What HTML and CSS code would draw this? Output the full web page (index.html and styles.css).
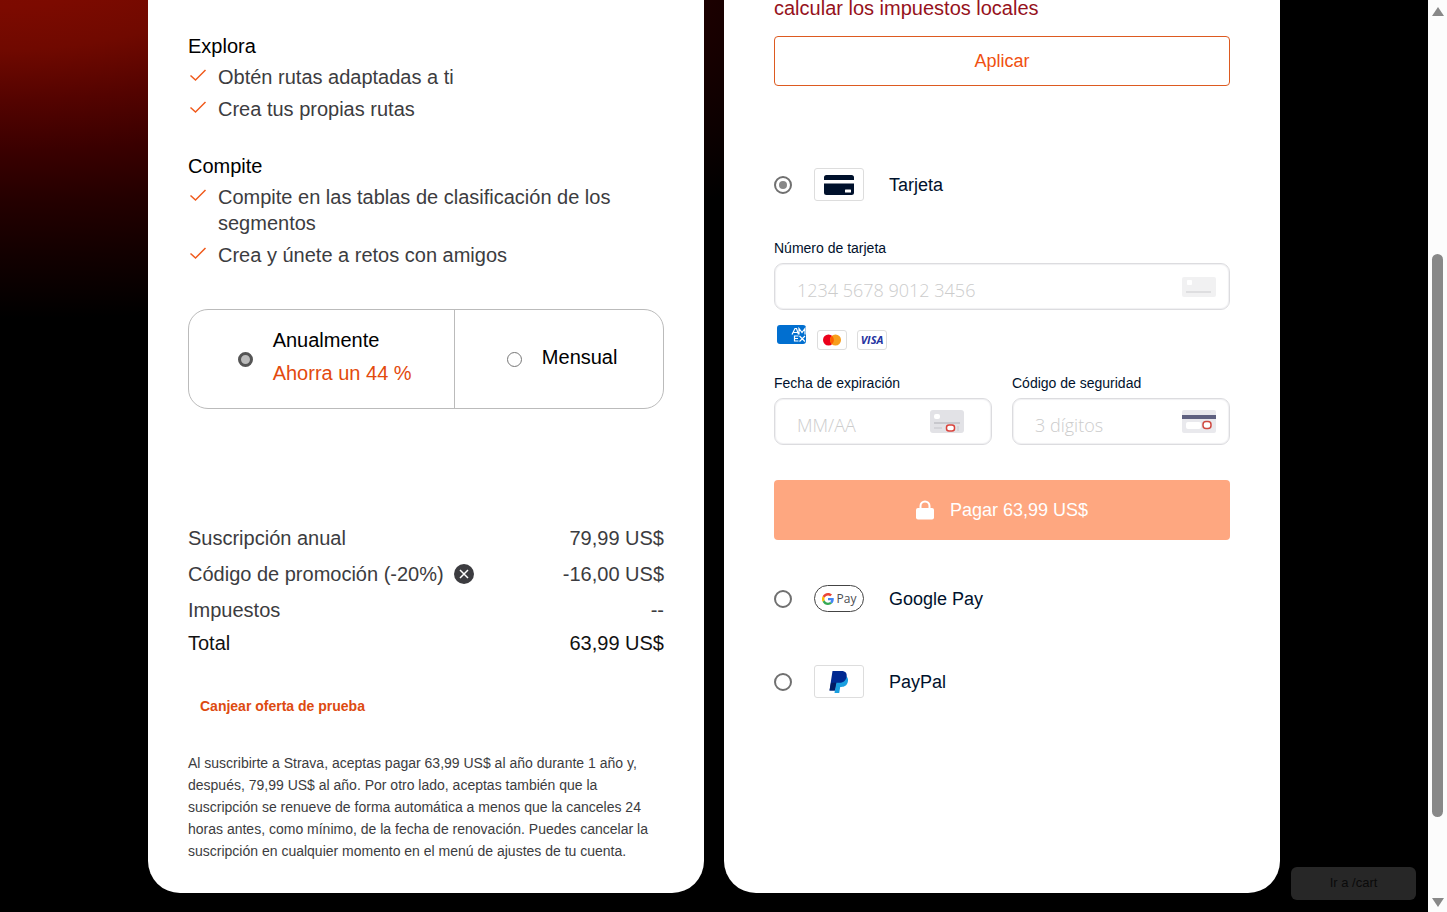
FILE: index.html
```html
<!DOCTYPE html>
<html lang="es">
  <head>
    <meta charset="utf-8">
    <meta name="viewport" content="width=device-width, initial-scale=1">
    <title>Suscripción</title>
    <link rel="stylesheet" href="styles.css">
  </head>
  <body>
    <main class="page">
      <div class="columns">
        <!-- Plan summary -->
        <section class="card card-plan">
          <h2 class="group-title">Explora</h2>
          <ul class="features">
            <li>
              <svg class="check" width="20" height="20" viewBox="0 0 20 20"><path d="M2.5 11.500l5 4.500L17.500 6"></path></svg>
              Obtén rutas adaptadas a ti
            </li>
            <li>
              <svg class="check" width="20" height="20" viewBox="0 0 20 20"><path d="M2.5 11.500l5 4.500L17.500 6"></path></svg>
              Crea tus propias rutas
            </li>
          </ul>
          <h2 class="group-title">Compite</h2>
          <ul class="features">
            <li>
              <svg class="check" width="20" height="20" viewBox="0 0 20 20"><path d="M2.5 11.500l5 4.500L17.500 6"></path></svg>
              Compite en las tablas de clasificación de los segmentos
            </li>
            <li>
              <svg class="check" width="20" height="20" viewBox="0 0 20 20"><path d="M2.5 11.500l5 4.500L17.500 6"></path></svg>
              Crea y únete a retos con amigos
            </li>
          </ul>

          <div class="plans">
            <label class="plan plan-year">
              <input class="plan-radio" type="radio" name="plan" checked>
              <span class="plan-text">Anualmente <span class="saving">Ahorra un 44 %</span></span>
            </label>
            <label class="plan plan-month">
              <input class="plan-radio" type="radio" name="plan">
              <span class="plan-text">Mensual</span>
            </label>
          </div>

          <dl class="summary">
            <div class="summary-row"><dt>Suscripción anual</dt><dd>79,99 US$</dd></div>
            <div class="summary-row">
              <dt>Código de promoción (-20%)
                <button class="remove" type="button" aria-label="Quitar código">
                  <svg width="20" height="20" viewBox="0 0 20 20"><circle cx="10" cy="10" r="10" fill="#3c3c40"></circle><path d="M6 6l8 8M14 6l-8 8" stroke="#fff" stroke-width="1.500"></path></svg>
                </button>
              </dt>
              <dd>-16,00 US$</dd>
            </div>
            <div class="summary-row"><dt>Impuestos</dt><dd>--</dd></div>
            <div class="summary-row total"><dt>Total</dt><dd>63,99 US$</dd></div>
          </dl>

          <button class="redeem" type="button">Canjear oferta de prueba</button>

          <p class="legal">Al suscribirte a Strava, aceptas pagar 63,99 US$ al año durante 1 año y, después, 79,99 US$ al año. Por otro lado, aceptas también que la suscripción se renueve de forma automática a menos que la canceles 24 horas antes, como mínimo, de la fecha de renovación. Puedes cancelar la suscripción en cualquier momento en el menú de ajustes de tu cuenta.</p>
        </section>

        <!-- Payment -->
        <section class="card card-pay">
          <p class="error">calcular los impuestos locales</p>
          <button class="apply" type="button">Aplicar</button>

          <form class="payment">
            <label class="method">
              <input class="method-radio" type="radio" name="method" checked>
              <span class="method-icon">
                <svg width="30" height="20" viewBox="0 0 30 20"><path fill="#00112c" d="M2.500 0h25A2.500 2.500 0 0 1 30 2.500V5H0V2.500A2.500 2.500 0 0 1 2.500 0zM0 8.500h30v9a2.500 2.500 0 0 1-2.500 2.500h-25A2.500 2.500 0 0 1 0 17.500z"></path><rect x="21" y="14.500" width="6" height="3" rx=".5" fill="#fff"></rect></svg>
              </span>
              Tarjeta
            </label>

            <div class="field">
              <label for="number">Número de tarjeta</label>
              <div class="box">
                <input id="number" type="text" placeholder="1234 5678 9012 3456">
                <svg width="34" height="22" viewBox="0 0 34 22"><rect y="1" width="34" height="20" rx="2" fill="#f1f1f2"></rect><rect x="5" y="4" width="5" height="5" rx="1" fill="#fff"></rect><rect x="4" y="15" width="25" height="2" fill="#dedee0"></rect></svg>
              </div>
            </div>

            <div class="brands">
              <svg width="30" height="20" viewBox="0 0 30 20">
                <rect width="29" height="19" rx="3" fill="#016fd0"></rect>
                <g fill="none" stroke="#fff" stroke-width="1.200"><path d="M15 9.500l3-6h1.500l2 6M16.500 7.500h4M22 9.500v-6l3 4 3-4v6M21.500 11h-4v5h4M17.500 13.500h3.500M22.500 11l5.500 5.500M28 11l-5.500 5.500"></path></g>
              </svg>
              <span class="brand">
                <svg width="20" height="12" viewBox="0 0 20 12"><circle cx="6.500" cy="6" r="5.500" fill="#eb001b"></circle><circle cx="13.500" cy="6" r="5.500" fill="#f79e1b"></circle><path d="M10 1.800a5.500 5.500 0 0 1 0 8.400 5.500 5.500 0 0 1 0-8.400z" fill="#ff5f00"></path></svg>
              </span>
              <span class="brand visa">VISA</span>
            </div>

            <div class="pair">
              <div class="field">
                <label for="expiry">Fecha de expiración</label>
                <div class="box box-expiry">
                  <input id="expiry" type="text" placeholder="MM/AA">
                  <svg width="34" height="24" viewBox="0 0 34 24"><rect width="34" height="23" rx="3" fill="#e2e2e6"></rect><rect x="4" y="4" width="6" height="5" rx="2" fill="#fff"></rect><rect x="4" y="12" width="26" height="2" fill="#c8c8cd"></rect><rect x="4" y="17" width="8" height="2" fill="#d3d3d8"></rect><rect x="16.500" y="15" width="8" height="6" rx="2.500" fill="#fff" stroke="#d9433c" stroke-width="1.500"></rect><path d="M28 16v5" stroke="#c8c8cd"></path></svg>
                </div>
              </div>
              <div class="field">
                <label for="cvv">Código de seguridad</label>
                <div class="box">
                  <input id="cvv" type="text" placeholder="3 dígitos">
                  <svg width="34" height="24" viewBox="0 0 34 24"><rect width="34" height="23" rx="2" fill="#e9e9ed"></rect><rect y="5" width="34" height="4" fill="#5f6180"></rect><rect x="4" y="12" width="15" height="7" rx="2" fill="#fff"></rect><rect x="21" y="11.500" width="8" height="7" rx="3" fill="#fff" stroke="#cf4840" stroke-width="1.500"></rect></svg>
                </div>
              </div>
            </div>

            <button class="pay" type="button">
              <svg width="18" height="20" viewBox="0 0 18 20"><path d="M4.500 9V6a4.500 4.500 0 0 1 9 0v3" fill="none" stroke="#fff" stroke-width="2"></path><rect y="8" width="18" height="11.500" rx="2" fill="#fff"></rect></svg>
              Pagar 63,99 US$
            </button>

            <label class="method method-google">
              <input class="method-radio" type="radio" name="method">
              <span class="gpay">
                <svg width="12" height="12" viewBox="0 0 48 48"><path fill="#ea4335" d="M24 9.500c3.500 0 6.700 1.200 9.200 3.600l6.900-6.900C35.900 2.400 30.500 0 24 0 14.600 0 6.500 5.400 2.600 13.200l8 6.200C12.400 13.700 17.700 9.500 24 9.500z"></path><path fill="#4285f4" d="M47 24.500c0-1.600-.2-3.100-.4-4.500H24v9h12.900c-.6 3-2.200 5.500-4.700 7.200l7.700 6C44.400 38 47 31.800 47 24.500z"></path><path fill="#fbbc05" d="M10.500 28.600a14.500 14.500 0 0 1 0-9.200l-8-6.200a24 24 0 0 0 0 21.600z"></path><path fill="#34a853" d="M24 48c6.500 0 11.900-2.100 15.900-5.800l-7.700-6c-2.200 1.500-4.900 2.300-8.200 2.300-6.300 0-11.600-4.200-13.500-9.900l-8 6.200C6.500 42.600 14.600 48 24 48z"></path></svg>
                <span>Pay</span>
              </span>
              Google Pay
            </label>
            <label class="method method-paypal">
              <input class="method-radio" type="radio" name="method">
              <span class="method-icon">
                <svg width="20" height="24" viewBox="0 0 20 24"><path fill="#1a9fe0" d="M17 6c2 1.500 2.400 3.600 1.800 6-.9 3.600-3.500 4.900-6.600 4.900h-1L10.200 23H5.500L7.500 9z"></path><path fill="#002991" d="M3.500 1h9c4 0 5.800 2.200 5.100 6-.8 4-3.600 5.800-7.400 5.800H7.300L5.800 20.500H.500z"></path><path fill="#001c64" d="M.5 20.500L2 12.800h5.300l-1.500 7.700z"></path></svg>
              </span>
              PayPal
            </label>
          </form>
        </section>
      </div>
      <a class="goto" href="/cart">Ir a /cart</a>
    </main>

    <div class="scrollbar" aria-hidden="true">
      <span class="arrow arrow-up"></span>
      <span class="track-before"></span>
      <span class="thumb"></span>
      <span class="track-after"></span>
      <span class="arrow arrow-down"></span>
    </div>
  </body>
</html>
```

FILE: styles.css
```css
* {
  box-sizing: border-box;
}

body {
  margin: 0;
  min-height: 100vh;
  display: flex;
  background-color: #000;
  color: #000;
  font-family: "Liberation Sans", Arial, Helvetica, sans-serif;
  font-size: 20px;
  line-height: 26px;
}

h2, p, ul, dl, dd {
  margin: 0;
  padding: 0;
}

button, input {
  font-family: inherit;
}

svg {
  display: block;
  flex: none;
}

.page {
  flex: 1;
  min-width: 0;
  background: radial-gradient(ellipse 1040px 390px at 0 -40px, #800b00 0%, #7c0a00 12%, #700900 23%, #540300 36%, #3a0000 49%, #240000 62%, #120000 76%, #000 92%);
}

.columns {
  display: grid;
  grid-template-columns: minmax(0, 1fr) minmax(0, 1fr);
  gap: 20px;
  max-width: 1132px;
  margin: 0 auto;
  padding-bottom: 19px;
}

.card {
  background-color: #fff;
  border-radius: 0 0 32px 32px;
}

.card-plan {
  padding: 33px 40px 31px;
}

.card-pay {
  padding: 0 50px;
}

/* Feature lists */
.group-title {
  font-size: 20px;
  font-weight: 400;
  margin-bottom: 5px;
}

.features {
  list-style: none;
  display: flex;
  flex-direction: column;
  gap: 6px;
  margin-bottom: 31px;
  color: #3c3c40;
}

.features li {
  display: flex;
  gap: 10px;
}

.check {
  fill: none;
  stroke: #f05a1c;
  stroke-width: 1.5;
}

/* Plan selector */
.plans {
  display: flex;
  min-height: 100px;
  margin-top: 41px;
  border: 1px solid #bbb;
  border-radius: 20px;
}

.plan {
  display: flex;
  align-items: center;
  justify-content: center;
  gap: 20px;
  padding-left: 6px;
}

.plan-year {
  flex: 9;
  border-right: 1px solid #bbb;
}

.plan-month {
  flex: 7;
}

.plan-text {
  display: flex;
  flex-direction: column;
  gap: 7px;
  padding-bottom: 5px;
}

.saving {
  color: #e34a0d;
}

.plan-radio, .method-radio {
  appearance: none;
  flex: none;
  margin: 0;
  border-radius: 50%;
}

.plan-radio {
  width: 15px;
  height: 15px;
  border: 1px solid #777;
}

.plan-radio:checked {
  border: 3px solid #555;
  background-color: #bbb;
}

/* Price summary */
.summary {
  margin-top: 116px;
  display: flex;
  flex-direction: column;
  gap: 10px;
  color: #3c3c40;
}

.summary-row {
  display: flex;
  justify-content: space-between;
}

.summary-row dt {
  display: flex;
  align-items: center;
  gap: 10px;
}

.total {
  margin-top: -3px;
  color: #111;
}

.remove {
  padding: 0;
  border: none;
  background: none;
  cursor: pointer;
}

.redeem {
  display: block;
  height: 30px;
  margin: 35px 0 31px;
  padding: 0 12px;
  border: none;
  background: none;
  color: #dd4a10;
  font-size: 14px;
  font-weight: 700;
  cursor: pointer;
}

.legal {
  color: #3c3c40;
  font-size: 14px;
  line-height: 22px;
}

/* Payment column */
.error {
  color: #96121c;
  line-height: 16px;
}

.apply {
  display: block;
  width: 100%;
  height: 50px;
  margin-top: 20px;
  border: 1px solid #dd5a20;
  border-radius: 4px;
  background-color: #fff;
  color: #f05010;
  font-size: 18px;
  cursor: pointer;
}

.payment {
  margin-top: 82px;
}

.method {
  display: flex;
  align-items: center;
  min-height: 33px;
  color: #00112c;
  font-size: 18px;
}

.method-radio {
  width: 18px;
  height: 18px;
  margin-right: 22px;
  border: 2px solid #707070;
}

.method-radio:checked {
  background-color: #888;
  background-clip: content-box;
  padding: 3px;
}

.method-icon, .gpay {
  display: flex;
  align-items: center;
  justify-content: center;
  width: 50px;
  height: 33px;
  margin-right: 25px;
}

.method-icon {
  border: 1px solid #ddd;
  border-radius: 3px;
}

.gpay {
  gap: 3px;
  height: 27px;
  border: 1px solid #444;
  border-radius: 14px;
  color: #4b4d51;
  font-family: "Open Sans", sans-serif;
  font-size: 12px;
}

.field {
  color: #00112c;
  font-size: 14px;
}

.field > label {
  display: block;
  line-height: 16px;
  margin-bottom: 7px;
}

.method + .field {
  margin-top: 39px;
}

.box {
  display: flex;
  align-items: center;
  height: 47px;
  padding: 0 13px 0 22px;
  border: 1px solid #dcdcdf;
  border-radius: 9px;
  box-shadow: inset 0 0 1px 1px #f0f0f2;
}

.box-expiry {
  padding-right: 27px;
}

.box input {
  flex: 1;
  min-width: 0;
  height: 100%;
  padding: 6px 0 0;
  border: none;
  outline: none;
  background: none;
  font-family: "Open Sans", sans-serif;
  font-size: 18px;
  font-weight: 300;
}

.box input::placeholder {
  color: #ccc;
  opacity: 1;
}

.brands {
  display: flex;
  gap: 10px;
  height: 25px;
  margin: 15px 0 25px;
  padding-left: 3px;
}

.brand {
  display: flex;
  align-items: center;
  justify-content: center;
  align-self: flex-end;
  width: 30px;
  height: 20px;
  border: 1px solid #ddd;
  border-radius: 3px;
}

.visa {
  color: #2433a0;
  font-family: "Open Sans", sans-serif;
  font-size: 11px;
  font-style: italic;
  font-weight: 700;
}

.pair {
  display: grid;
  grid-template-columns: minmax(0, 1fr) minmax(0, 1fr);
  gap: 20px;
}

.pay {
  display: flex;
  align-items: center;
  justify-content: center;
  gap: 16px;
  width: 100%;
  height: 60px;
  margin-top: 35px;
  border: none;
  border-radius: 4px;
  background-color: #fea780;
  color: #fff;
  font-size: 18px;
}

.method-google {
  margin-top: 42px;
}

.method-paypal {
  margin-top: 50px;
}

.goto {
  position: fixed;
  right: 31px;
  bottom: 12px;
  width: 125px;
  height: 33px;
  border-radius: 6px;
  background-color: #272727;
  color: #0a0a0a;
  font-size: 13px;
  line-height: 32px;
  text-align: center;
  text-decoration: none;
}

/* Page scrollbar */
.scrollbar {
  flex: none;
  display: flex;
  flex-direction: column;
  align-items: center;
  width: 19px;
  padding: 7px 0 5px;
  background-color: #fcfcfc;
}

.arrow {
  border: 6px solid transparent;
}

.arrow-up {
  border-top: none;
  border-bottom: 9px solid #888;
}

.arrow-down {
  border-bottom: none;
  border-top: 9px solid #888;
}

.track-before {
  flex: 238;
}

.thumb {
  flex: 563;
  width: 11px;
  border-radius: 6px;
  background-color: #888;
}

.track-after {
  flex: 81;
}
```
